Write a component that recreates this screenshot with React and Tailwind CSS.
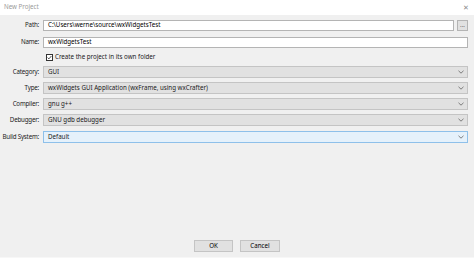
import React from 'react';

const font = { fontFamily: '"Noto Sans", "Open Sans", sans-serif' };

function Chevron() {
  return (
    <svg width="6" height="4" viewBox="0 0 6 4" className="shrink-0">
      <polyline points="0.5,0.8 3,3.2 5.5,0.8" fill="none" stroke="#606060" strokeWidth="0.8" />
    </svg>
  );
}

function Label({ children }) {
  return (
    <div className="w-[40px] shrink-0 text-right whitespace-nowrap pr-[1px] tracking-[-0.2px] text-[#1a1a1a]">
      {children}
    </div>
  );
}

function Select({ label, value, active, className = '' }) {
  return (
    <div className={`flex items-center gap-[3px] ${className}`}>
      <Label>{label}</Label>
      <div
        className={`flex-1 h-[12px] flex items-center justify-between pl-[4px] pr-[3px] border ${
          active ? 'bg-[#e5f1fb] border-[#8ec0ea]' : 'bg-[#e1e1e1] border-[#c4c4c4]'
        }`}
      >
        <span className="text-[#1a1a1a]">{value}</span>
        <Chevron />
      </div>
    </div>
  );
}

export default function App() {
  return (
    <div className="w-[474px] h-[258px] bg-[#f0f0f0] flex flex-col text-[6.2px] leading-none" style={font}>
      {/* title bar */}
      <div className="h-[15px] bg-white flex items-center justify-between pl-[4px] pr-[5px] shrink-0">
        <span className="text-[#9a9a9a]">New Project</span>
        <span className="text-[#8a8a8a] text-[7px]">✕</span>
      </div>

      <div className="flex flex-col pr-[6px]">
        {/* Path */}
        <div className="flex items-center gap-[3px] mt-[5px]">
          <Label>Path:</Label>
          <div className="flex-1 h-[11px] bg-white border border-[#b4b4b4] flex items-center pl-[4px]">
            C:\Users\werne\source\wxWidgetsTest
          </div>
          <div className="w-[11px] h-[11px] bg-[#e1e1e1] border border-[#b4b4b4] flex items-end justify-center pb-[2px] text-[6px] text-[#444]">
            ...
          </div>
        </div>

        {/* Name */}
        <div className="flex items-center gap-[3px] mt-[6px]">
          <Label>Name:</Label>
          <div className="flex-1 h-[11px] bg-white border border-[#b4b4b4] flex items-center pl-[4px]">
            wxWidgetsTest
          </div>
        </div>

        {/* Checkbox */}
        <div className="flex items-center gap-[2px] mt-[5px] ml-[46px] h-[8px]">
          <div className="w-[7px] h-[7px] border border-[#333] bg-white flex items-center justify-center">
            <svg width="5" height="5" viewBox="0 0 5 5">
              <polyline points="0.6,2.6 1.9,3.9 4.4,1" fill="none" stroke="#222" strokeWidth="0.8" />
            </svg>
          </div>
          <span className="text-[#1a1a1a]">Create the project in its own folder</span>
        </div>

        <Select label="Category:" value="GUI" className="mt-[5px]" />
        <Select label="Type:" value="wxWidgets GUI Application (wxFrame, using wxCrafter)" className="mt-[4px]" />
        <Select label="Compiler:" value="gnu g++" className="mt-[4px]" />
        <Select label="Debugger:" value="GNU gdb debugger" className="mt-[4px]" />
        <Select label="Build System:" value="Default" active className="mt-[5px]" />
      </div>

      <div className="flex-1" />

      {/* buttons */}
      <div className="flex justify-center gap-[7px] mb-[5px]">
        <div className="w-[39px] h-[12px] bg-[#e1e1e1] border border-[#c4c4c4] flex items-center justify-center">OK</div>
        <div className="w-[40px] h-[12px] bg-[#e1e1e1] border border-[#c4c4c4] flex items-center justify-center">Cancel</div>
      </div>
      <div className="h-[1px] bg-[#f7f7f7]" />
    </div>
  );
}
